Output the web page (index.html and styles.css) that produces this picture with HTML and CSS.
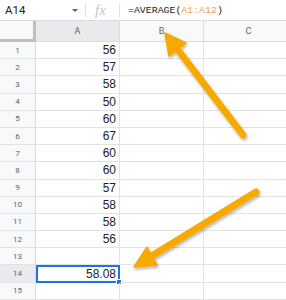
FILE: index.html
```html
<!DOCTYPE html>
<html lang="en">

<head>
    <meta charset="UTF-8">
    <title>Average</title>
    <link rel="stylesheet" href="styles.css">
</head>

<body>
    <div class="sheet">
        <div class="formula-bar">
            <div class="name-box">A14</div>
            <div class="caret"></div>
            <div class="sep"></div>
            <div class="fx">fx</div>
            <div class="sep"></div>
            <div class="formula">=AVERAGE(<span class="ref">A1:A12</span>)</div>
        </div>

        <div class="grid">
            <div class="corner"></div>
            <div class="col-head active">A</div>
            <div class="col-head">B</div>
            <div class="col-head">C</div>

            <div class="row-head">1</div><div class="cell num">56</div><div class="cell"></div><div class="cell"></div>
            <div class="row-head">2</div><div class="cell num">57</div><div class="cell"></div><div class="cell"></div>
            <div class="row-head">3</div><div class="cell num">58</div><div class="cell"></div><div class="cell"></div>
            <div class="row-head">4</div><div class="cell num">50</div><div class="cell"></div><div class="cell"></div>
            <div class="row-head">5</div><div class="cell num">60</div><div class="cell"></div><div class="cell"></div>
            <div class="row-head">6</div><div class="cell num">67</div><div class="cell"></div><div class="cell"></div>
            <div class="row-head">7</div><div class="cell num">60</div><div class="cell"></div><div class="cell"></div>
            <div class="row-head">8</div><div class="cell num">60</div><div class="cell"></div><div class="cell"></div>
            <div class="row-head">9</div><div class="cell num">57</div><div class="cell"></div><div class="cell"></div>
            <div class="row-head">10</div><div class="cell num">58</div><div class="cell"></div><div class="cell"></div>
            <div class="row-head">11</div><div class="cell num">58</div><div class="cell"></div><div class="cell"></div>
            <div class="row-head">12</div><div class="cell num">56</div><div class="cell"></div><div class="cell"></div>
            <div class="row-head">13</div><div class="cell"></div><div class="cell"></div><div class="cell"></div>
            <div class="row-head active">14</div><div class="cell num selected">58.08<span class="handle"></span></div><div class="cell"></div><div class="cell"></div>
            <div class="row-head">15</div><div class="cell"></div><div class="cell"></div><div class="cell"></div>
        </div>

        <svg class="arrows" width="286" height="300" viewBox="0 0 286 300">
            <defs>
                <filter id="shadow" x="-20%" y="-20%" width="140%" height="140%">
                    <feDropShadow dx="1" dy="2" stdDeviation="1.5" flood-color="#000" flood-opacity="0.3" />
                </filter>
            </defs>
            <g fill="#f7a900" stroke="#f7a900" filter="url(#shadow)">
                <line x1="243" y1="135" x2="175" y2="46" stroke-width="7" stroke-linecap="round" />
                <polygon points="165,33 186,43 169,56" stroke-width="1.5" stroke-linejoin="round" />
                <line x1="256" y1="192" x2="150" y2="257" stroke-width="7" stroke-linecap="round" />
                <polygon points="134,267 147,247 157,265" stroke-width="1.5" stroke-linejoin="round" />
            </g>
        </svg>
    </div>
</body>

</html>
```

FILE: styles.css
```css
* {
    margin: 0;
    padding: 0;
    box-sizing: border-box;
}

body {
    font-family: 'Liberation Sans', Arial, sans-serif;
    background: #fff;
    width: 286px;
    height: 300px;
    overflow: hidden;
}

.sheet {
    position: relative;
    width: 286px;
    height: 300px;
    overflow: hidden;
}

/* formula bar */
.formula-bar {
    display: flex;
    align-items: center;
    height: 21px;
    border-bottom: 1px solid #dadce0;
    color: #202124;
}

.name-box {
    width: 72px;
    padding-left: 5px;
    font-family: Roboto, sans-serif;
    font-size: 11.5px;
}

.caret {
    width: 0;
    height: 0;
    border-left: 3.5px solid transparent;
    border-right: 3.5px solid transparent;
    border-top: 3.5px solid #5f6368;
    margin-right: 7px;
    margin-top: 1px;
}

.sep {
    width: 1px;
    height: 15px;
    background: #e3e3e3;
}

.fx {
    width: 33px;
    padding-left: 9px;
    font-family: 'Liberation Serif', serif;
    font-style: italic;
    font-size: 15px;
    color: #c4c4c4;
}

.formula {
    padding-left: 8px;
    font-family: 'Liberation Mono', monospace;
    font-size: 9.9px;
    color: #202124;
}

.ref {
    color: #f19f4d;
}

/* grid */
.grid {
    display: grid;
    grid-template-columns: 36px 84px 84px 90px;
    grid-template-rows: 21px;
    grid-auto-rows: 17.2px;
}

.corner {
    background: #f8f9fa;
    border-right: 3px solid #c0c0c0;
    border-bottom: 3px solid #c0c0c0;
}

.col-head {
    display: flex;
    align-items: center;
    justify-content: center;
    background: #f8f9fa;
    border-right: 1px solid #dadce0;
    border-bottom: 1px solid #dadce0;
    font-family: Roboto, sans-serif;
    font-size: 9px;
    color: #5f6368;
}

.row-head {
    display: flex;
    align-items: center;
    justify-content: center;
    background: #f8f9fa;
    border-right: 1px solid #dadce0;
    border-bottom: 1px solid #e2e3e3;
    font-family: Roboto, sans-serif;
    font-size: 8px;
    color: #5f6368;
}

.col-head.active,
.row-head.active {
    background: #e8eaed;
}

.cell {
    position: relative;
    display: flex;
    align-items: center;
    justify-content: flex-end;
    padding-right: 3px;
    border-right: 1px solid #e2e3e3;
    border-bottom: 1px solid #e2e3e3;
    font-size: 12px;
    color: #222;
}

.cell.selected {
    border: 2px solid #1a73e8;
    padding-right: 2px;
}

.handle {
    position: absolute;
    right: -4px;
    bottom: -4px;
    width: 6px;
    height: 6px;
    background: #1a73e8;
    border: 1px solid #fff;
}

.arrows {
    position: absolute;
    left: 0;
    top: 0;
}
```
